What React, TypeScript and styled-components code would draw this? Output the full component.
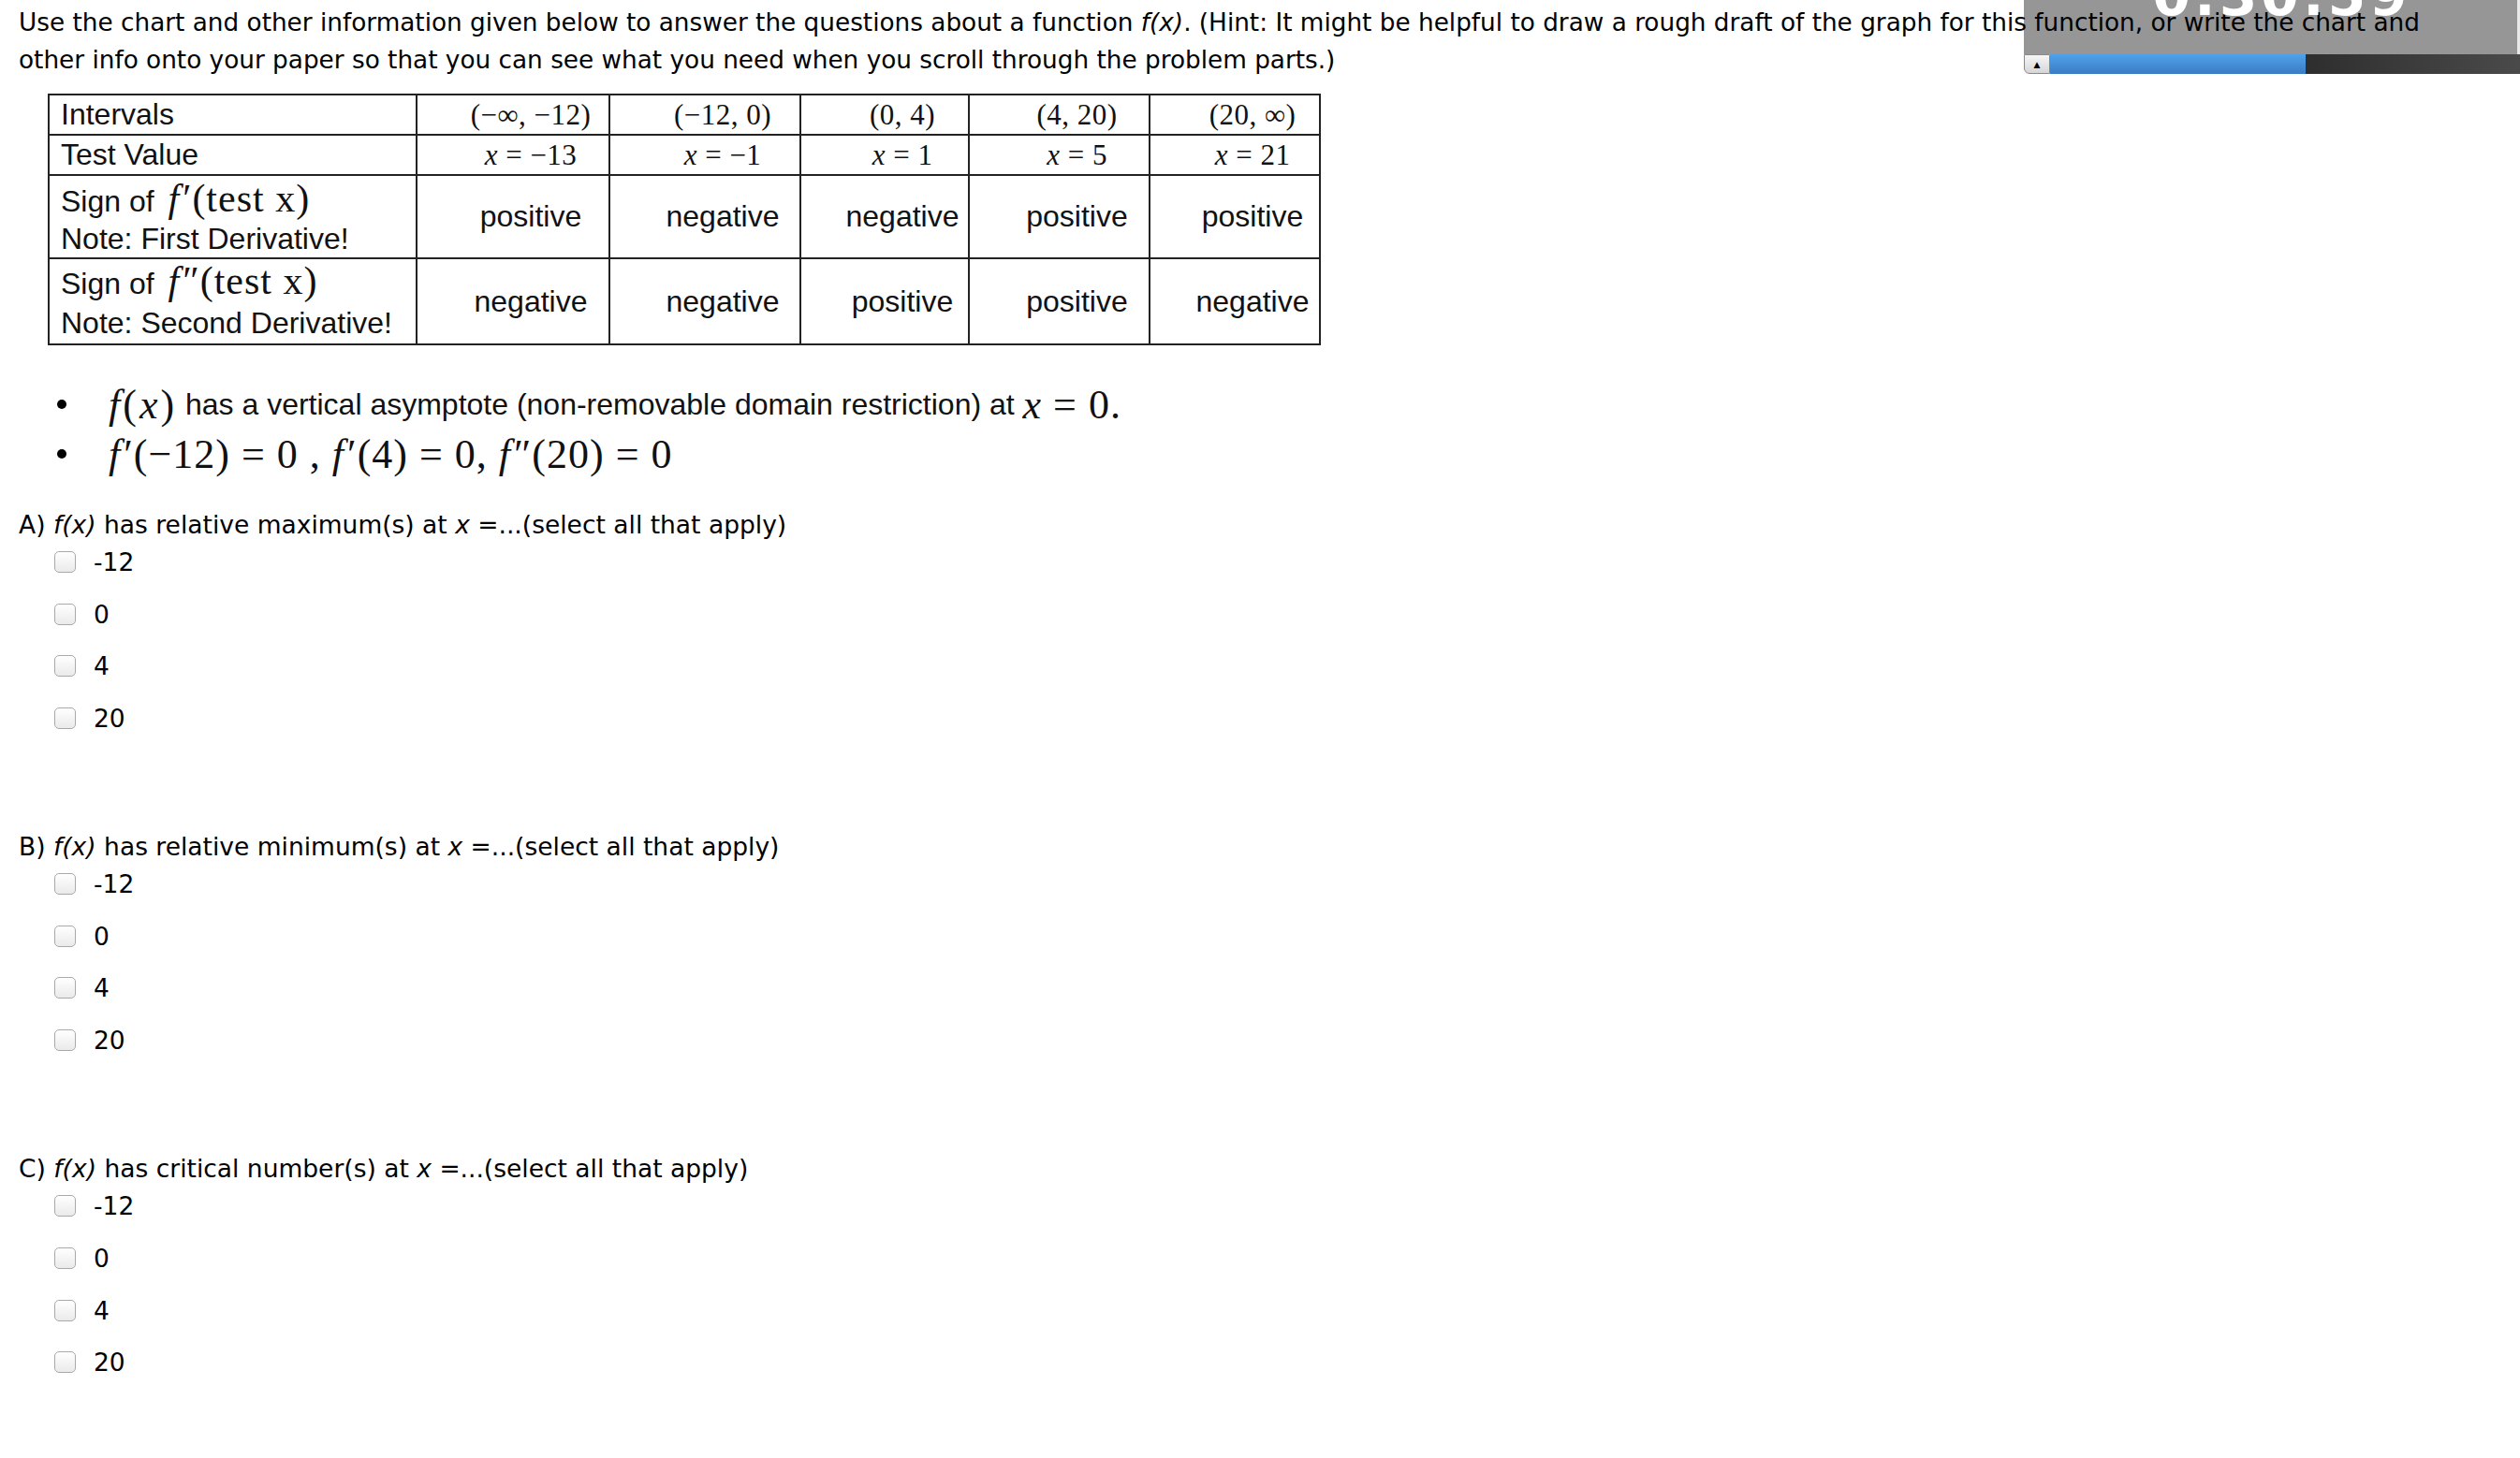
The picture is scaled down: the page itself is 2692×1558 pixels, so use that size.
import React from "react";
import styled, { createGlobalStyle } from "styled-components";

const Global = createGlobalStyle`
  html, body { margin: 0; padding: 0; background: #fff; }
  body { font-family: "DejaVu Sans", Verdana, sans-serif; color: #000; }
`;

const Page = styled.div`
  position: relative;
  padding: 4px 20px 40px 20px;
`;

const Intro = styled.p`
  margin: 0;
  font-size: 26.3px;
  line-height: 40px;
  white-space: nowrap;
`;

const Em = styled.i`
  font-style: italic;
`;

const Chart = styled.table`
  margin: 16px 0 0 31px;
  border-collapse: collapse;
  table-layout: fixed;
  width: 1358px;
  border: 2px solid #222;
  font-family: "Liberation Sans", Arial, sans-serif;
  font-size: 32px;
  color: #111;
`;

const Row = styled.tr<{ $h: number }>`
  height: ${(p) => p.$h}px;
`;

const LabelCell = styled.td`
  border: 2px solid #222;
  padding: 0 0 0 12px;
  text-align: left;
  vertical-align: middle;
  white-space: nowrap;
`;

const ValueCell = styled.td`
  border: 2px solid #222;
  padding: 0 0 0 38px;
  text-align: center;
  vertical-align: middle;
  white-space: nowrap;
`;

const LabelLine = styled.div<{ $lh: number }>`
  line-height: ${(p) => p.$lh}px;
  height: ${(p) => p.$lh}px;
`;

const MathText = styled.span<{ $size: number; $track?: number }>`
  font-family: "Liberation Serif", "Times New Roman", serif;
  font-size: ${(p) => p.$size}px;
  letter-spacing: ${(p) => p.$track ?? 0.5}px;
`;

const Var = styled.i`
  font-style: italic;
`;

const Prime = styled.span`
  margin-left: 3px;
`;

const Gap = styled.span<{ $w: number }>`
  display: inline-block;
  width: ${(p) => p.$w}px;
`;

const Facts = styled.ul`
  list-style: none;
  margin: 36.5px 0 0 0;
  padding: 0;
`;

const Fact = styled.li`
  display: flex;
  align-items: center;
  height: 53px;
  font-family: "Liberation Sans", Arial, sans-serif;
  font-size: 32px;
  white-space: nowrap;
  color: #111;
`;

const Dot = styled.span`
  flex: none;
  width: 10px;
  height: 10px;
  border-radius: 50%;
  background: #000;
  margin: 0 45px 0 41px;
`;

const Question = styled.section<{ $first?: boolean }>`
  margin-top: ${(p) => (p.$first ? "29px" : "97px")};
`;

const Prompt = styled.div`
  font-size: 26.5px;
  line-height: 40px;
  white-space: nowrap;
`;

const Options = styled.div`
  display: flex;
  flex-direction: column;
  gap: 15.7px;
`;

const Option = styled.label`
  display: flex;
  align-items: center;
  height: 40px;
  padding-left: 38px;
  gap: 19px;
  font-size: 26.5px;
`;

const Box = styled.span`
  box-sizing: border-box;
  width: 23px;
  height: 23px;
  border: 1.5px solid #a9a9a9;
  border-radius: 5px;
  background: linear-gradient(#ffffff, #eaeaea);
`;

const Timer = styled.div`
  position: absolute;
  top: 0;
  right: 0;
  width: 530px;
`;

const TimerFace = styled.div`
  position: relative;
  height: 58px;
  overflow: hidden;
  background: rgba(0, 0, 0, 0.41);
  border-right: 3px solid #e8e8e8;
`;

const TimerDigits = styled.div`
  position: absolute;
  top: -33px;
  left: 24px;
  right: 0;
  text-align: center;
  color: #fff;
  font-family: "DejaVu Sans", sans-serif;
  font-weight: bold;
  font-size: 58px;
  line-height: 1;
  letter-spacing: 4px;
`;

const Bar = styled.div`
  display: flex;
  height: 21px;
`;

const BarButton = styled.div`
  box-sizing: border-box;
  width: 28px;
  display: flex;
  align-items: center;
  justify-content: center;
  background: linear-gradient(#f6f6f6, #d6d6d6);
  border: 1px solid #8a8a8a;
  border-radius: 0 0 0 6px;
  font-size: 9px;
  color: #000;
`;

const BarFill = styled.div`
  width: 273px;
  background: linear-gradient(#4fa2ec, #3b7cc3);
`;

const BarRest = styled.div`
  flex: 1;
  background: linear-gradient(90deg, #2e2e2e, #4a4a4a);
`;

const intervals = ["(−∞, −12)", "(−12, 0)", "(0, 4)", "(4, 20)", "(20, ∞)"];
const tests = ["−13", "−1", "1", "5", "21"];
const first = ["positive", "negative", "negative", "positive", "positive"];
const second = ["negative", "negative", "positive", "positive", "negative"];
const colWidths = [393, 206, 204, 180, 193, 182];
const choices = ["-12", "0", "4", "20"];

const questions: { letter: string; text: string }[] = [
  { letter: "A", text: "has relative maximum(s) at" },
  { letter: "B", text: "has relative minimum(s) at" },
  { letter: "C", text: "has critical number(s) at" },
];

export default function App() {
  return (
    <Page>
      <Global />
      <Intro>
        Use the chart and other information given below to answer the questions about a function <Em>f(x)</Em>. (Hint: It might be helpful to draw a rough draft of the graph for this function, or write the chart and
        <br />
        other info onto your paper so that you can see what you need when you scroll through the problem parts.)
      </Intro>

      <Chart>
        <colgroup>
          {colWidths.map((w, i) => (
            <col key={i} style={{ width: w }} />
          ))}
        </colgroup>
        <tbody>
          <Row $h={43}>
            <LabelCell>Intervals</LabelCell>
            {intervals.map((t) => (
              <ValueCell key={t}>
                <MathText $size={31}>{t}</MathText>
              </ValueCell>
            ))}
          </Row>
          <Row $h={43}>
            <LabelCell>Test Value</LabelCell>
            {tests.map((t) => (
              <ValueCell key={t}>
                <MathText $size={31}>
                  <Var>x</Var> = {t}
                </MathText>
              </ValueCell>
            ))}
          </Row>
          <Row $h={89}>
            <LabelCell>
              <LabelLine $lh={46}>
                Sign of <Gap $w={6} />
                <MathText $size={42} $track={1}>
                  <Var>f</Var>
                  <Prime>′</Prime>(test x)
                </MathText>
              </LabelLine>
              <LabelLine $lh={40}>Note: First Derivative!</LabelLine>
            </LabelCell>
            {first.map((t, i) => (
              <ValueCell key={i}>{t}</ValueCell>
            ))}
          </Row>
          <Row $h={91}>
            <LabelCell>
              <LabelLine $lh={46}>
                Sign of <Gap $w={6} />
                <MathText $size={42} $track={1}>
                  <Var>f</Var>
                  <Prime>″</Prime>(test x)
                </MathText>
              </LabelLine>
              <LabelLine $lh={44}>Note: Second Derivative!</LabelLine>
            </LabelCell>
            {second.map((t, i) => (
              <ValueCell key={i}>{t}</ValueCell>
            ))}
          </Row>
        </tbody>
      </Chart>

      <Facts>
        <Fact>
          <Dot />
          <MathText $size={44} $track={3}>
            <Var>f</Var>(<Var>x</Var>)
          </MathText>
          &nbsp;has a vertical asymptote (non-removable domain restriction) at&nbsp;
          <MathText $size={44} $track={1}>
            <Var>x</Var> = 0.
          </MathText>
        </Fact>
        <Fact>
          <Dot />
          <MathText $size={44} $track={1}>
            <Var>f</Var>
            <Prime>′</Prime>(−12) = 0 , <Var>f</Var>
            <Prime>′</Prime>(4) = 0, <Var>f</Var>
            <Prime>″</Prime>(20) = 0
          </MathText>
        </Fact>
      </Facts>

      {questions.map((q, qi) => (
        <Question key={q.letter} $first={qi === 0}>
          <Prompt>
            {q.letter}) <Em>f(x)</Em> {q.text} <Em>x</Em> =...(select all that apply)
          </Prompt>
          <Options>
            {choices.map((c) => (
              <Option key={c}>
                <Box />
                {c}
              </Option>
            ))}
          </Options>
        </Question>
      ))}

      <Timer>
        <TimerFace>
          <TimerDigits>0:30:59</TimerDigits>
        </TimerFace>
        <Bar>
          <BarButton>▲</BarButton>
          <BarFill />
          <BarRest />
        </Bar>
      </Timer>
    </Page>
  );
}
